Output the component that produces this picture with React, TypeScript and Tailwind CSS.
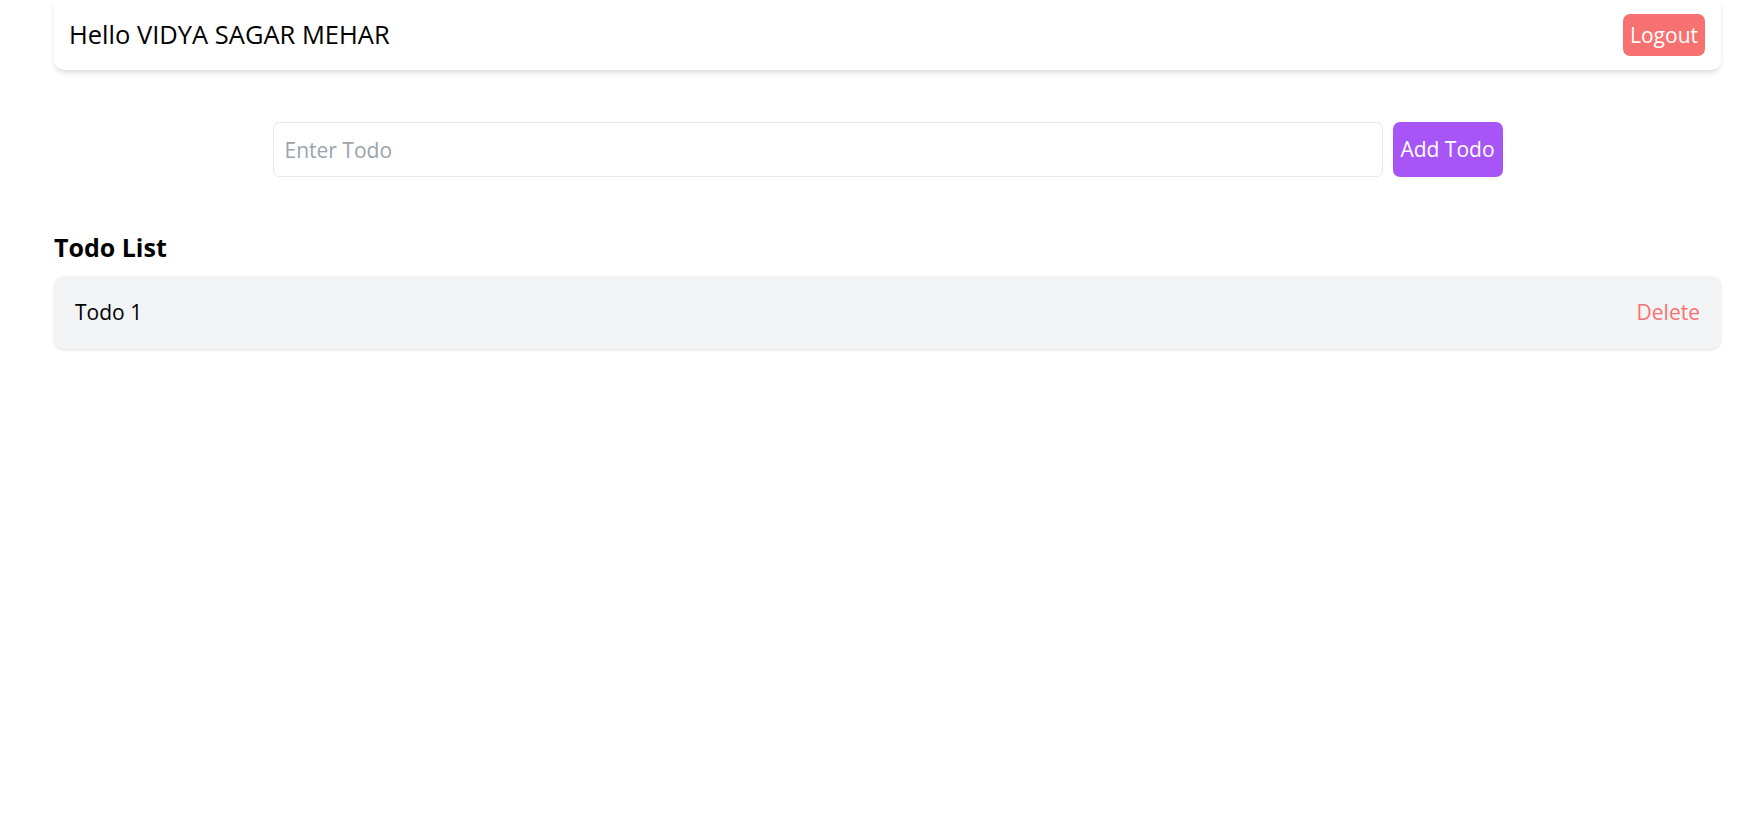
export default function App() {
  return (
    <div className="min-h-screen bg-white font-['Open_Sans',sans-serif] text-black">
      <div className="ml-[54px] mr-[32px]">
        <header className="flex items-center justify-between h-[70px] pl-[15px] pr-[16px] bg-white rounded-b-[10px] shadow-md">
          <h1 className="text-[25.5px] leading-none">Hello VIDYA SAGAR MEHAR</h1>
          <button className="h-[42px] px-[7px] rounded-[7px] bg-[#f87171] text-white text-[21px] leading-none">
            Logout
          </button>
        </header>

        <div className="flex justify-center gap-[10px] mt-[52px]">
          <input
            type="text"
            placeholder="Enter Todo"
            className="w-[1110px] h-[55px] px-[11px] rounded-[7px] border border-[#e5e7eb] text-[21px] placeholder:text-[#9ca3af] outline-none"
          />
          <button className="w-[110px] h-[55px] rounded-[7px] bg-[#a855f7] text-white text-[21px]">
            Add Todo
          </button>
        </div>

        <h2 className="mt-[53px] mb-[11px] text-[25px] leading-[35px] font-bold">Todo List</h2>
        <ul>
          <li className="flex items-center justify-between h-[73px] px-[21px] rounded-[10px] bg-[#f3f4f6] shadow-sm">
            <span className="text-[21px]">Todo 1</span>
            <button className="text-[21px] text-[#f87171]">Delete</button>
          </li>
        </ul>
      </div>
    </div>
  );
}
